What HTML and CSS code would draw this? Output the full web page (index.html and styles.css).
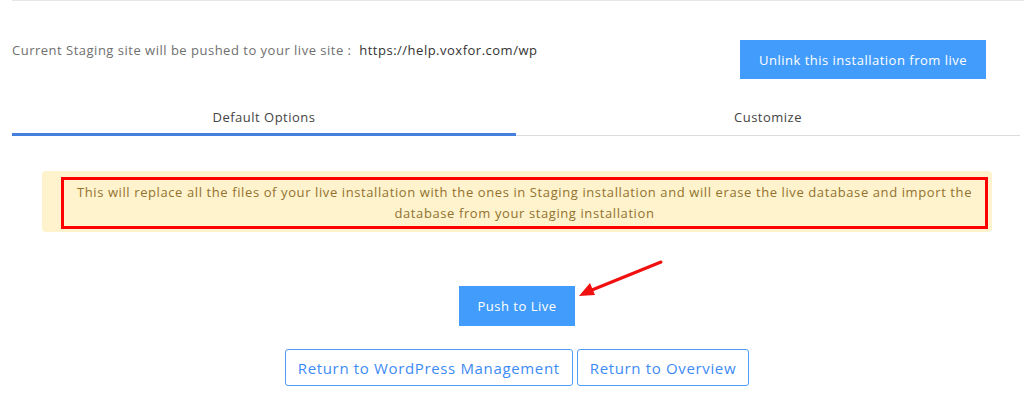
FILE: index.html
```html
<!doctype html>
<html lang="en">
	<head>
		<meta charset="UTF-8" />
		<meta name="viewport" content="width=device-width, initial-scale=1.0" />
		<title>Push to Live</title>
		<link rel="stylesheet" href="styles.css">
	</head>
	<body>
		<div id="staging-panel">
			<div class="site-row">
				<p class="site-text">
					Current Staging site will be pushed to your live site :&nbsp;
					<span class="site-url">https://help.voxfor.com/wp</span>
				</p>
				<button class="btn-primary btn-unlink">Unlink this installation from live</button>
			</div>

			<div class="tabs">
				<div class="tab active">Default Options</div>
				<div class="tab">Customize</div>
			</div>

			<div class="alert-box">
				<div class="alert-mark">
					This will replace all the files of your live installation with the ones in Staging installation and will erase the live database and import the database from your staging installation
				</div>
			</div>

			<div class="push-row">
				<button class="btn-primary btn-push">Push to Live</button>
				<svg class="arrow" width="100" height="50" viewBox="0 0 100 50">
					<line x1="86" y1="4" x2="12" y2="34" stroke="#f01010" stroke-width="3" stroke-linecap="round" />
					<polygon points="4,38 15,25 20,37" fill="#f01010" />
				</svg>
			</div>

			<div class="return-row">
				<button class="btn-outline">Return to WordPress Management</button>
				<button class="btn-outline">Return to Overview</button>
			</div>
		</div>
	</body>
</html>
```

FILE: styles.css
```css
body {
	margin: 0;
	background-color: #fff;
	font-family: "Open Sans", "Liberation Sans", sans-serif;
	letter-spacing: 0.5px;
	overflow: hidden;
}
#staging-panel {
	margin-left: 12px;
	border-top: 1px solid #e6e6e6;
}
.site-row {
	display: flex;
	justify-content: space-between;
	align-items: flex-start;
	padding-top: 39px;
	padding-right: 38px;
}
.site-text {
	margin: 0;
	font-size: 13px;
	line-height: 20px;
	letter-spacing: 0.5px;
	color: #6f6f6f;
}
.site-url {
	color: #333;
}
.btn-primary {
	background-color: #429cfb;
	color: #fff;
	border: none;
	font-family: inherit;
	font-size: 13px;
	letter-spacing: 0.5px;
	cursor: pointer;
}
.btn-unlink {
	width: 246px;
	height: 39px;
}
.tabs {
	display: flex;
	margin-right: 4px;
	margin-top: 28px;
	border-bottom: 1px solid #dcdcdc;
}
.tab {
	flex: 1;
	text-align: center;
	font-size: 13px;
	line-height: 20px;
	color: #444;
	padding-bottom: 6px;
	border-bottom: 3px solid transparent;
	margin-bottom: -1px;
}
.tab.active {
	border-bottom-color: #4680df;
}
.alert-box {
	margin: 35px 32px 0 30px;
	padding: 6px 4px 3px 19px;
	background-color: #fff3cd;
	border-radius: 4px;
}
.alert-mark {
	border: 3px solid #f00;
	text-align: center;
	font-size: 13px;
	line-height: 21px;
	letter-spacing: 0.6px;
	color: #91722f;
	padding: 2px 4px;
}
.push-row {
	position: relative;
	display: flex;
	justify-content: center;
	margin-top: 54px;
	margin-right: 2px;
}
.btn-push {
	width: 116px;
	height: 40px;
}
.arrow {
	position: absolute;
	left: 563px;
	top: -28px;
}
.return-row {
	display: flex;
	justify-content: center;
	gap: 4px;
	margin-top: 23px;
	margin-right: 2px;
}
.btn-outline {
	height: 37px;
	padding: 0 12px;
	background-color: #fff;
	border: 1px solid #4f9cf7;
	border-radius: 3px;
	color: #3d8bf5;
	font-family: inherit;
	font-size: 15px;
	letter-spacing: 0.65px;
	cursor: pointer;
}
```
